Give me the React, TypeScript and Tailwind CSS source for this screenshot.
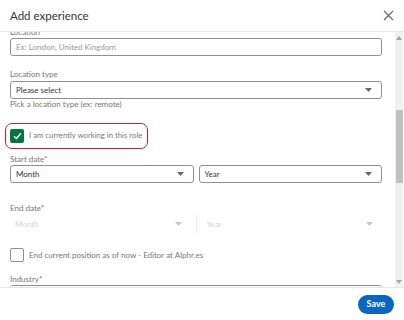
import React from "react";

const Caret = ({ light = false }: { light?: boolean }) => (
  <svg width="7" height="4" viewBox="0 0 7 4" className="shrink-0">
    <path d="M0 0 L7 0 L3.5 4 Z" fill={light ? "#c8c8c8" : "#666"} />
  </svg>
);

function Select({ text, className = "" }: { text: string; className?: string }) {
  return (
    <div
      className={`h-[18px] border border-[#8f8f8f] rounded-[3px] flex items-center justify-between pl-[5px] pr-[9px] ${className}`}
    >
      <span className="text-[8px] text-[#333]">{text}</span>
      <Caret />
    </div>
  );
}

function DisabledSelect({ text, className = "" }: { text: string; className?: string }) {
  return (
    <div className={`h-[18px] flex items-center justify-between pl-[5px] pr-[9px] ${className}`}>
      <span className="text-[8px] text-[#d6d6d6]">{text}</span>
      <Caret light />
    </div>
  );
}

export default function App() {
  return (
    <div
      className="w-[404px] h-[320px] bg-white flex flex-col overflow-hidden"
      style={{ fontFamily: 'Lato, "Open Sans", sans-serif' }}
    >
      {/* Header */}
      <div className="h-[32px] shrink-0 border-b border-[#e6e6e6] flex items-center justify-between pl-[10px] pr-[10px]">
        <span className="text-[11.5px] text-[#333]">Add experience</span>
        <svg width="11" height="11" viewBox="0 0 11 11">
          <path d="M1 1 L10 10 M10 1 L1 10" stroke="#666" strokeWidth="1.1" />
        </svg>
      </div>

      {/* Body */}
      <div className="flex-1 flex overflow-hidden">
        <div className="flex-1 overflow-hidden pl-[10px] pr-[13px]">
          <div className="-mt-[5px] flex flex-col">
            <div className="h-[11px] leading-[11px] text-[8px] text-[#777]">Location</div>
            <div className="h-[18px] border border-[#8f8f8f] rounded-[3px] flex items-center pl-[5px]">
              <span className="text-[8px] text-[#999]">Ex: London, United Kingdom</span>
            </div>

            <div className="h-[11px] leading-[11px] mt-[13px] text-[8px] text-[#777]">Location type</div>
            <Select text="Please select" className="mt-[1px]" />
            <div className="h-[11px] leading-[11px] text-[8px] text-[#777]">
              Pick a location type (ex: remote)
            </div>

            <div className="mt-[13px] -ml-[5px] w-[143px] h-[26px] border-[1.5px] border-[#d11f28] rounded-[7px] flex items-center pl-[4px] gap-[5px]">
              <div className="w-[14px] h-[14px] shrink-0 rounded-[2px] bg-[#057642] flex items-center justify-center">
                <svg width="9" height="8" viewBox="0 0 9 8">
                  <path d="M1 4.2 L3.4 6.5 L8 1.3" stroke="white" strokeWidth="1.3" fill="none" />
                </svg>
              </div>
              <span className="text-[7.75px] text-[#777] whitespace-nowrap">I am currently working in this role</span>
            </div>

            <div className="h-[11px] leading-[11px] mt-[5px] text-[8px] text-[#777]">Start date*</div>
            <div className="flex gap-[5px]">
              <Select text="Month" className="flex-1" />
              <Select text="Year" className="flex-1" />
            </div>

            <div className="h-[11px] leading-[11px] mt-[20px] text-[8px] text-[#777]">End date*</div>
            <div className="flex gap-[5px] mt-[1px]">
              <DisabledSelect text="Month" className="flex-1" />
              <div className="w-px h-[18px] bg-[#f0f0f0]" />
              <DisabledSelect text="Year" className="flex-1" />
            </div>

            <div className="mt-[15px] flex items-center gap-[5px]">
              <div className="w-[14px] h-[14px] shrink-0 rounded-[2px] border border-[#8f8f8f]" />
              <span className="text-[8px] text-[#777] whitespace-nowrap">
                End current position as of now - Editor at Alphr.es
              </span>
            </div>

            <div className="h-[11px] leading-[11px] mt-[12px] text-[8px] text-[#777]">Industry*</div>
            <div className="h-[18px] border-t border-[#8f8f8f] rounded-t-[3px]" />
          </div>
        </div>

        {/* Scrollbar */}
        <div className="w-[8px] mr-[1px] bg-[#f1f1f1] flex flex-col items-center">
          <svg width="6" height="4" viewBox="0 0 6 4" className="mt-[4px]">
            <path d="M0 4 L6 4 L3 0 Z" fill="#a3a3a3" />
          </svg>
          <div className="mt-[70px] w-[7px] h-[73px] bg-[#c1c1c1]" />
          <div className="flex-1" />
          <svg width="6" height="4" viewBox="0 0 6 4" className="mb-[3px]">
            <path d="M0 0 L6 0 L3 4 Z" fill="#a3a3a3" />
          </svg>
        </div>
      </div>

      {/* Footer */}
      <div className="h-[33px] shrink-0 border-t border-[#e6e6e6] flex items-center justify-end pr-[10px]">
        <button className="h-[19px] w-[36px] rounded-full bg-[#0a66c2] text-white text-[9px] font-bold flex items-center justify-center">
          Save
        </button>
      </div>
    </div>
  );
}
